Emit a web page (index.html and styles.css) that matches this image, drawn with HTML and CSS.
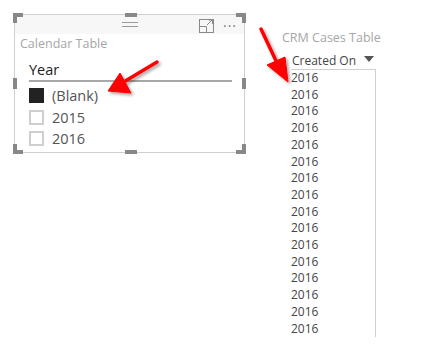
FILE: index.html
```html
<!DOCTYPE html>
<html lang="en">
<head>
    <meta charset="UTF-8">
    <title>Slicer and table</title>
    <link rel="stylesheet" href="styles.css">
</head>
<body>
    <div class="page">
        <!-- Slicer visual -->
        <div class="slicer">
            <div class="slicer-head">
                <span class="grip"></span>
                <svg class="focus-icon" width="15" height="14" viewBox="0 0 15 14">
                    <rect x="0.5" y="0.5" width="14" height="13" fill="none" stroke="#8a8a8a"/>
                    <path d="M0.5 7.5 H7.5 V13.5" fill="none" stroke="#8a8a8a"/>
                    <path d="M8 6 L13 1 M9.5 1 H13.5 V5" fill="none" stroke="#8a8a8a"/>
                </svg>
                <span class="more">&middot;&middot;&middot;</span>
            </div>
            <div class="slicer-title">Calendar Table</div>
            <div class="slicer-body">
                <div class="field">Year</div>
                <ul class="items">
                    <li><span class="box checked"></span>(Blank)</li>
                    <li><span class="box"></span>2015</li>
                    <li><span class="box"></span>2016</li>
                </ul>
            </div>
            <span class="handle tl"></span>
            <span class="handle tr"></span>
            <span class="handle bl"></span>
            <span class="handle br"></span>
            <span class="handle tm"></span>
            <span class="handle bm"></span>
            <span class="handle ml"></span>
            <span class="handle mr"></span>
        </div>

        <!-- Table visual -->
        <div class="table-visual">
            <div class="table-title">CRM Cases Table</div>
            <div class="col">
                <div class="col-head">Created On <span class="sort"></span></div>
                <div class="rows">
                    <div class="row">2016</div>
                    <div class="row">2016</div>
                    <div class="row">2016</div>
                    <div class="row">2016</div>
                    <div class="row">2016</div>
                    <div class="row">2016</div>
                    <div class="row">2016</div>
                    <div class="row">2016</div>
                    <div class="row">2016</div>
                    <div class="row">2016</div>
                    <div class="row">2016</div>
                    <div class="row">2016</div>
                    <div class="row">2016</div>
                    <div class="row">2016</div>
                    <div class="row">2016</div>
                    <div class="row">2016</div>
                </div>
            </div>
        </div>

        <!-- annotation arrows -->
        <svg class="arrows" width="426" height="351" viewBox="0 0 426 351">
            <defs>
                <filter id="shadow" x="-30%" y="-30%" width="160%" height="160%">
                    <feDropShadow dx="2" dy="2" stdDeviation="1.5" flood-color="#000" flood-opacity="0.35"/>
                </filter>
            </defs>
            <g fill="#f00" stroke="#f00" filter="url(#shadow)">
                <line x1="157" y1="62" x2="122" y2="83" stroke-width="3.5" stroke-linecap="round"/>
                <polygon points="108,91 120,73 131,93" stroke-width="1" stroke-linejoin="round"/>
                <line x1="261" y1="29" x2="278" y2="65" stroke-width="3.5" stroke-linecap="round"/>
                <polygon points="288,82 267,65 285,57" stroke-width="1" stroke-linejoin="round"/>
            </g>
        </svg>
    </div>
</body>
</html>
```

FILE: styles.css
```css
body {
    margin: 0;
    background: #fff;
    font-family: "Segoe UI", "Open Sans", sans-serif;
}

.page {
    position: relative;
    display: flex;
    align-items: flex-start;
    width: 426px;
    height: 351px;
}

/* slicer */
.slicer {
    position: relative;
    margin: 14px 0 0 14px;
    width: 229px;
    height: 137px;
    border: 1px solid #d0d0d0;
    background: #fff;
}

.slicer-head {
    display: flex;
    align-items: center;
    height: 19px;
    background: #f7f7f7;
    padding: 0 6px 0 0;
}

.grip {
    width: 16px;
    height: 3px;
    border-top: 1px solid #9a9a9a;
    border-bottom: 1px solid #9a9a9a;
    margin-left: 107px;
}

.focus-icon {
    margin-left: 61px;
    margin-top: 3px;
}

.more {
    margin-left: 9px;
    color: #7a7a7a;
    font-size: 14px;
    letter-spacing: 1px;
    line-height: 19px;
    margin-top: 2px;
}

.slicer-title {
    padding: 1px 0 0 5px;
    font-size: 12.5px;
    line-height: 17px;
    color: #a6a6a6;
}

.slicer-body {
    padding: 8px 12px 0 14px;
}

.field {
    font-size: 14.5px;
    line-height: 19px;
    color: #222;
    border-bottom: 2px solid #a8a8a8;
    padding-bottom: 1px;
}

.items {
    list-style: none;
    margin: 0;
    padding: 3px 0 0 0;
}

.items li {
    display: flex;
    align-items: center;
    height: 21.5px;
    font-size: 14.5px;
    color: #555;
}

.box {
    box-sizing: border-box;
    width: 15px;
    height: 15px;
    border: 2px solid #cfcfcf;
    margin-right: 8px;
}

.box.checked {
    background: #222;
    border-color: #222;
}

.handle {
    position: absolute;
    background: #888;
}

.handle.tl, .handle.tr, .handle.bl, .handle.br {
    background: none;
    border: 0 solid #888;
    width: 6px;
    height: 6px;
}

.handle.tl { left: -2px; top: -2px; border-left-width: 4px; border-top-width: 4px; }
.handle.tr { right: -2px; top: -2px; border-right-width: 4px; border-top-width: 4px; }
.handle.bl { left: -2px; bottom: -2px; border-left-width: 4px; border-bottom-width: 4px; }
.handle.br { right: -2px; bottom: -2px; border-right-width: 4px; border-bottom-width: 4px; }

.handle.tm { top: -2px; left: 110px; width: 12px; height: 4px; }
.handle.bm { bottom: -2px; left: 110px; width: 12px; height: 4px; }
.handle.ml { left: -2px; top: 63px; width: 4px; height: 11px; }
.handle.mr { right: -2px; top: 63px; width: 4px; height: 11px; }

/* table */
.table-visual {
    margin: 29px 0 0 37px;
}

.table-title {
    font-size: 12.5px;
    line-height: 17px;
    color: #a6a6a6;
}

.col {
    margin: 7px 0 0 9px;
    width: 85px;
}

.col-head {
    display: flex;
    align-items: center;
    font-size: 12px;
    line-height: 16px;
    color: #444;
    padding-left: 1px;
}

.sort {
    width: 0;
    height: 0;
    border-left: 5px solid transparent;
    border-right: 5px solid transparent;
    border-top: 6px solid #555;
    margin: -4px 0 0 8px;
}

.rows {
    border-top: 1px solid #d0d0d0;
    border-right: 1px solid #d0d0d0;
}

.row {
    font-size: 12px;
    line-height: 16.7px;
    color: #444;
}

.arrows {
    position: absolute;
    left: 0;
    top: 0;
    pointer-events: none;
}
```
